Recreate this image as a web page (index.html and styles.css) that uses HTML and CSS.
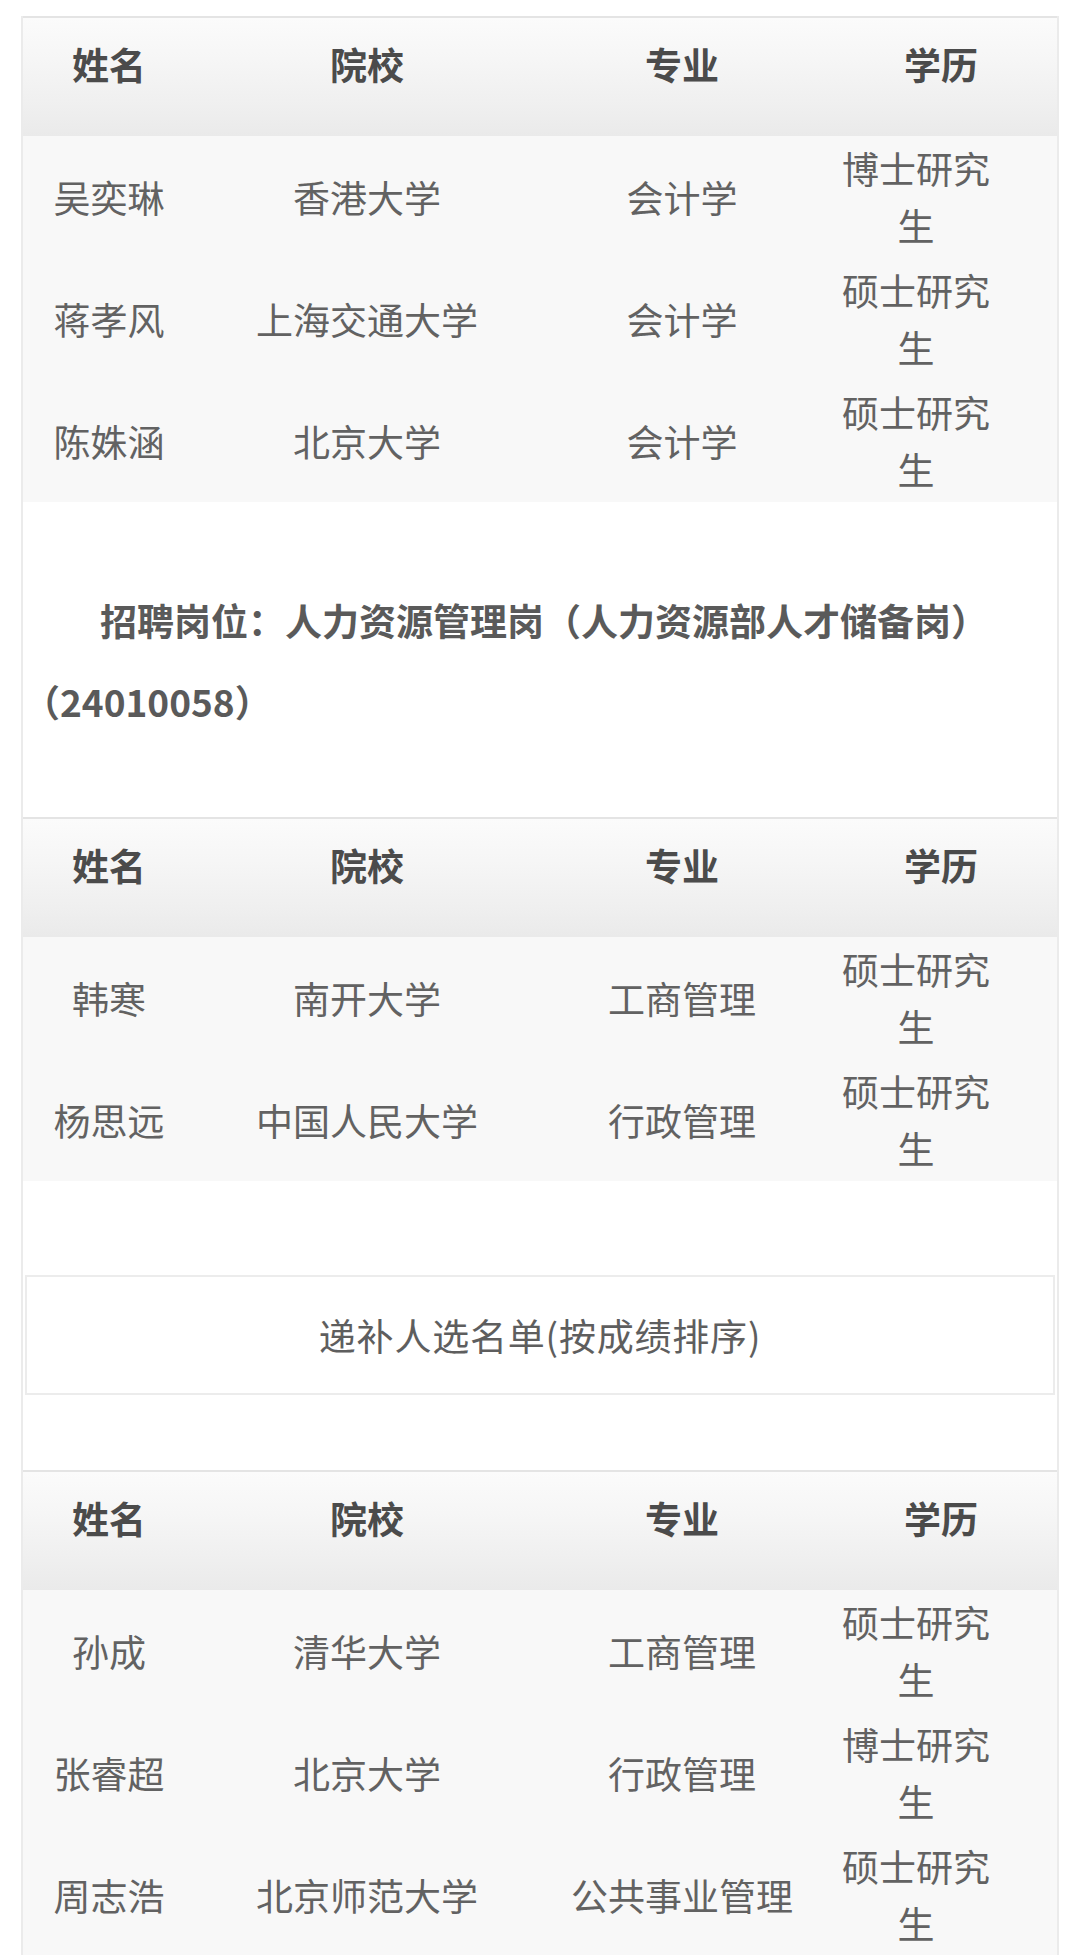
FILE: index.html
```html
<!DOCTYPE html>
<html lang="zh-CN">
<head>
<meta charset="utf-8">
<title>招聘名单</title>
<link rel="stylesheet" href="styles.css">
</head>
<body>
<div class="page">
  <div class="frame">
    <section class="tbl">
      <div class="thead">
        <div class="th">姓名</div>
        <div class="th">院校</div>
        <div class="th">专业</div>
        <div class="th">学历</div>
      </div>
      <div class="tr">
        <div class="td">吴奕琳</div>
        <div class="td">香港大学</div>
        <div class="td">会计学</div>
        <div class="td edu">博士研究生</div>
      </div>
      <div class="tr">
        <div class="td">蒋孝风</div>
        <div class="td">上海交通大学</div>
        <div class="td">会计学</div>
        <div class="td edu">硕士研究生</div>
      </div>
      <div class="tr">
        <div class="td">陈姝涵</div>
        <div class="td">北京大学</div>
        <div class="td">会计学</div>
        <div class="td edu">硕士研究生</div>
      </div>
    </section>

    <p class="post-title">招聘岗位：人力资源管理岗（人力资源部人才储备岗）（24010058）</p>

    <section class="tbl">
      <div class="thead">
        <div class="th">姓名</div>
        <div class="th">院校</div>
        <div class="th">专业</div>
        <div class="th">学历</div>
      </div>
      <div class="tr">
        <div class="td">韩寒</div>
        <div class="td">南开大学</div>
        <div class="td">工商管理</div>
        <div class="td edu">硕士研究生</div>
      </div>
      <div class="tr">
        <div class="td">杨思远</div>
        <div class="td">中国人民大学</div>
        <div class="td">行政管理</div>
        <div class="td edu">硕士研究生</div>
      </div>
    </section>

    <div class="spacer-a"></div>
    <div class="note-box">递补人选名单(按成绩排序)</div>
    <div class="spacer-b"></div>

    <section class="tbl">
      <div class="thead">
        <div class="th">姓名</div>
        <div class="th">院校</div>
        <div class="th">专业</div>
        <div class="th">学历</div>
      </div>
      <div class="tr">
        <div class="td">孙成</div>
        <div class="td">清华大学</div>
        <div class="td">工商管理</div>
        <div class="td edu">硕士研究生</div>
      </div>
      <div class="tr">
        <div class="td">张睿超</div>
        <div class="td">北京大学</div>
        <div class="td">行政管理</div>
        <div class="td edu">博士研究生</div>
      </div>
      <div class="tr">
        <div class="td">周志浩</div>
        <div class="td">北京师范大学</div>
        <div class="td">公共事业管理</div>
        <div class="td edu">硕士研究生</div>
      </div>
    </section>
  </div>
</div>
</body>
</html>
```

FILE: styles.css
```css
* {
  box-sizing: border-box;
}

html, body {
  margin: 0;
  padding: 0;
  background: #ffffff;
}

body {
  font-family: "Noto Sans CJK SC", "Noto Sans", sans-serif;
  font-size: 37px;
  color: #626262;
}

.page {
  padding: 16px 21px 0 21px;
}

.frame {
  border-left: 2px solid #ebebeb;
  border-right: 2px solid #ebebeb;
}

.thead,
.tr {
  display: grid;
  grid-template-columns: 172px 344px 286px 1fr;
}

.thead {
  height: 120px;
  border-top: 2px solid #e4e4e4;
  padding-top: 18px;
  background: linear-gradient(to bottom, #fbfbfb 0%, #f6f6f6 35%, #efefef 75%, #eaeaea 100%);
}

.th {
  text-align: center;
  font-weight: 700;
  color: #4b4b4b;
  line-height: 57px;
}

.tr {
  background: #f8f8f8;
  padding: 4px 0;
}

.td {
  display: flex;
  align-items: center;
  justify-content: center;
  text-align: center;
  line-height: 57px;
}

.td.edu {
  padding: 0 60px 0 10px;
}

.post-title {
  margin: 0;
  padding: 78px 0 75px 0;
  font-weight: 700;
  color: #5a5a5a;
  line-height: 81px;
  text-indent: 77px;
}

.spacer-a {
  height: 94px;
}

.note-box {
  margin: 0 2px;
  height: 120px;
  border: 2px solid #ececec;
  display: flex;
  align-items: center;
  justify-content: center;
  color: #5e5e5e;
  letter-spacing: 0.8px;
}

.spacer-b {
  height: 75px;
}
```
